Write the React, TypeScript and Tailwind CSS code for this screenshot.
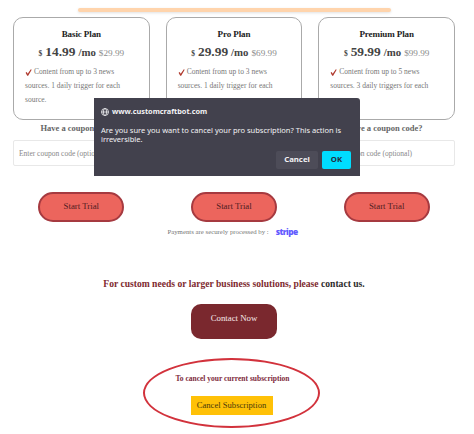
import React from 'react'

interface Plan {
  name: string
  price: string
  oldPrice: string
  lines: string[]
}

const plans: Plan[] = [
  {
    name: 'Basic Plan',
    price: '14.99',
    oldPrice: '$29.99',
    lines: ['Content from up to 3 news', 'sources. 1 daily trigger for each', 'source.']
  },
  {
    name: 'Pro Plan',
    price: '29.99',
    oldPrice: '$69.99',
    lines: ['Content from up to 3 news', 'sources. 1 daily trigger for each']
  },
  {
    name: 'Premium Plan',
    price: '59.99',
    oldPrice: '$99.99',
    lines: ['Content from up to 5 news', 'sources. 3 daily triggers for each']
  }
]

const PlanColumn: React.FC<{ plan: Plan }> = ({ plan }) => (
  <div className="flex flex-col items-center whitespace-nowrap">
    <div className="h-[103px] w-full rounded-[10px] border-[1.5px] border-[#aaa] px-[11px] pt-[9px]">
      <h3 className="text-center text-[9px] leading-[14px] font-bold tracking-[-0.1px] text-[#222]">{plan.name}</h3>
      <div className="mt-px flex h-5 items-baseline justify-center gap-[3px] leading-5 text-[#444]">
        <span className="text-[7.5px] font-bold">$</span>
        <span className="text-[13.4px] font-bold">{plan.price}</span>
        <span className="text-[10.8px] font-bold">/mo</span>
        <span className="text-[9.2px] text-[#8c8c8c]">{plan.oldPrice}</span>
      </div>
      <ul className="mt-[3px] text-[7.5px] leading-[14px] text-[#777]">
        {plan.lines.map((line, i) => (
          <li key={line} className="flex items-center">
            {i === 0 && (
              <svg viewBox="0 0 12 12" className="mr-[2px] h-[7px] w-[7px]" fill="#b03a2e">
                <path d="M1 6.5 3 5.2 4.6 8 10 .5 11.5 1.2 5.4 11.5H3.8Z" />
              </svg>
            )}
            {line}
          </li>
        ))}
      </ul>
    </div>
    <div className="h-4 pr-[5px] text-[8.5px] leading-4 font-bold text-[#666]">Have a coupon code?</div>
    <input
      type="text"
      placeholder="Enter coupon code (optional)"
      className="mt-[4px] h-[26px] w-full rounded-[2px] border border-[#e8e8e8] px-[5px] text-[7.5px] placeholder:text-[#888]"
    />
    <button className="mt-[26px] h-[30px] w-[86px] rounded-full border-2 border-[#a63a40] bg-[#ec655d] text-[8.8px] text-[#4f1c22]">
      Start Trial
    </button>
  </div>
)

const ConfirmDialog: React.FC = () => (
  <div className="absolute top-[98px] left-[94px] flex h-[78px] w-[266px] flex-col rounded-tr-[3px] bg-[#42414d] pt-[7px] pr-[9px] pl-[7px] font-['Noto_Sans'] text-[#f3f3f5]">
    <div className="flex h-[13px] items-center gap-[3px] text-[7.35px] font-bold whitespace-nowrap">
      <svg viewBox="0 0 16 16" className="h-2 w-2" fill="none" stroke="currentColor" strokeWidth="1.6">
        <circle cx="8" cy="8" r="7" />
        <ellipse cx="8" cy="8" rx="3.2" ry="7" />
        <path d="M1 8h14" />
      </svg>
      www.customcraftbot.com
    </div>
    <p className="mt-[8px] text-[7.5px] leading-[9px] whitespace-nowrap">
      Are you sure you want to cancel your pro subscription? This action is
      <br />
      irreversible.
    </p>
    <div className="mt-[7px] flex justify-end gap-[4px] text-[7.8px] font-bold">
      <button className="h-[18px] w-[42px] rounded-[2px] bg-[#4d4c58]">Cancel</button>
      <button className="h-[18px] w-[29px] rounded-[2px] bg-[#00ddff] text-[#20303e]">OK</button>
    </div>
  </div>
)

const App: React.FC = () => {
  return (
    <div className="relative h-[434px] w-[474px] overflow-hidden bg-white font-['Liberation_Serif',serif]">
      <div className="flex w-[442px] flex-col items-center pt-[8px] ml-[13px]">
        <div className="h-[4px] w-[313px] rounded-full bg-[#ffd4ac] shadow-[0_1px_3px_rgba(0,0,0,0.12)]" />

        <div className="mt-[5px] grid w-full grid-cols-3 gap-[16px]">
          {plans.map((plan) => (
            <PlanColumn key={plan.name} plan={plan} />
          ))}
        </div>

        <div className="mt-[3px] mr-[3px] flex h-[14px] items-center gap-[7px] whitespace-nowrap">
          <span className="text-[6.8px] text-[#777]">Payments are securely processed by :</span>
          <span className="font-['Open_Sans'] text-[8.4px] leading-none font-extrabold tracking-[-0.6px] text-[#635bff]">stripe</span>
        </div>

        <h2 className="mt-[37px] h-4 text-[9.6px] leading-4 font-bold whitespace-nowrap text-[#7e2a2f]">
          For custom needs or larger business solutions, please <span className="text-[#2b2b2b]">contact us.</span>
        </h2>
        <button className="mt-[12px] flex h-[35px] w-[86px] justify-center rounded-[10px] bg-[#7a282e] pt-[8px] text-[8.8px] leading-[13px] text-[#f5e9e9]">
          Contact Now
        </button>

        {/* Cancel area, circled in red */}
        <div className="mt-[19px] mr-[5px] flex h-[70px] w-[177px] flex-col items-center rounded-[50%] border-2 border-[#d2323c] pt-[13px]">
          <div className="h-3 pl-[2px] text-[7.5px] leading-3 font-bold whitespace-nowrap text-[#7e2a3c]">To cancel your current subscription</div>
          <button className="mt-[11px] h-[19px] w-[82px] bg-[#ffc107] text-[8.6px] whitespace-nowrap text-[#4a3b0c]">
            Cancel Subscription
          </button>
        </div>
      </div>

      <ConfirmDialog />
    </div>
  )
}

export default App
